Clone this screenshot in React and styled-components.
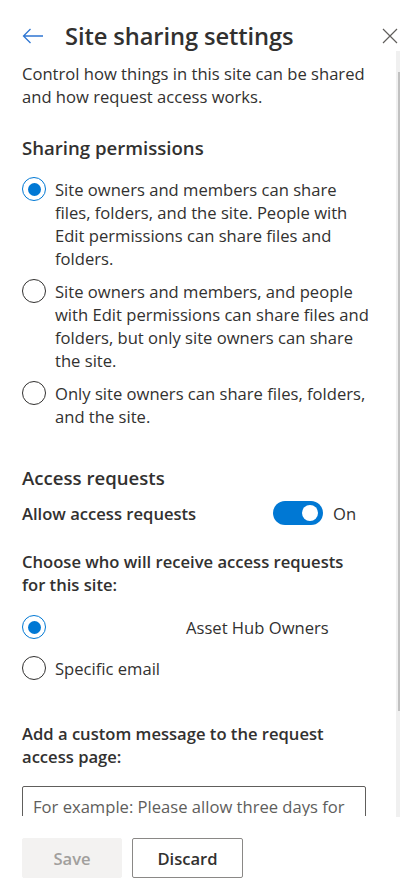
import React from "react";
import styled, { createGlobalStyle } from "styled-components";

const GlobalStyle = createGlobalStyle`
  html, body {
    margin: 0;
    padding: 0;
    background: #ffffff;
  }
  body {
    font-family: "Open Sans", "Noto Sans", Arial, sans-serif;
    color: #323130;
  }
  * { box-sizing: border-box; }
`;

const Panel = styled.div`
  position: relative;
  width: 400px;
  height: 884px;
  display: flex;
  flex-direction: column;
  overflow: hidden;
  background: #fff;
`;

const Header = styled.div`
  display: flex;
  align-items: center;
  height: 60px;
  padding: 16px 0 4px 22px;
`;

const IconButton = styled.button`
  display: flex;
  align-items: center;
  justify-content: center;
  padding: 0;
  border: none;
  background: none;
  width: ${(p) => p.$size}px;
  height: ${(p) => p.$size}px;
  cursor: pointer;
`;

const Title = styled.h1`
  margin: 0 0 0 21px;
  font-size: 23.7px;
  font-weight: 600;
  line-height: 32px;
  letter-spacing: -0.1px;
  color: #323130;
  flex: 1;
`;

const Scroll = styled.div`
  flex: 1;
  overflow: hidden;
  padding: 2px 30px 0 22px;
`;

const Text = styled.p`
  max-width: 344px;
  margin: ${(p) => p.$mt || 0}px 0 0;
  font-size: 16.6px;
  line-height: 23px;
  font-weight: ${(p) => (p.$bold ? 600 : 400)};
  color: #323130;
`;

const SectionTitle = styled.h2`
  margin: ${(p) => p.$mt}px 0 0;
  font-size: 18.6px;
  line-height: 24px;
  font-weight: 600;
  color: #323130;
`;

const RadioGroup = styled.div`
  display: flex;
  flex-direction: column;
  gap: ${(p) => p.$gap}px;
  margin-top: ${(p) => p.$mt}px;
`;

const Option = styled.label`
  display: flex;
  align-items: flex-start;
  gap: 9px;
  font-size: 16.6px;
  line-height: 23px;
  color: #323130;
`;

const Circle = styled.span`
  flex: none;
  width: 24px;
  height: 24px;
  margin-top: -1px;
  border-radius: 50%;
  border: 1px solid ${(p) => (p.$on ? "#0078d4" : "#323130")};
  display: flex;
  align-items: center;
  justify-content: center;
  &::after {
    content: "";
    display: ${(p) => (p.$on ? "block" : "none")};
    width: 13px;
    height: 13px;
    border-radius: 50%;
    background: #0078d4;
  }
`;

const Redacted = styled.span`
  display: inline-block;
  width: 131px;
`;

const ToggleRow = styled.div`
  display: flex;
  align-items: center;
  height: 24px;
  margin-top: 11px;
`;

const ToggleLabel = styled.span`
  font-size: 16.6px;
  font-weight: 600;
  width: 251px;
`;

const Switch = styled.span`
  width: 50px;
  height: 24px;
  border-radius: 12px;
  background: #0078d4;
  display: flex;
  align-items: center;
  justify-content: flex-end;
  padding-right: 5px;
  &::after {
    content: "";
    width: 16px;
    height: 16px;
    border-radius: 50%;
    background: #fff;
  }
`;

const SwitchText = styled.span`
  margin-left: 10px;
  font-size: 16.6px;
`;

const TextArea = styled.textarea`
  display: block;
  width: 344px;
  height: 90px;
  margin-top: 18px;
  padding: 8px 10px;
  border: 1px solid #605e5c;
  border-radius: 2px;
  resize: none;
  font-family: inherit;
  font-size: 16.6px;
  line-height: 23px;
  color: #323130;
  &::placeholder {
    color: #605e5c;
  }
`;

const Footer = styled.div`
  height: 68px;
  display: flex;
  gap: 10px;
  padding: 22px 0 0 22px;
`;

const Button = styled.button`
  height: 40px;
  width: ${(p) => p.$w}px;
  border-radius: 2px;
  font-family: inherit;
  font-size: 16.6px;
  font-weight: 600;
  background: ${(p) => (p.$disabled ? "#f3f2f1" : "#fff")};
  color: ${(p) => (p.$disabled ? "#a19f9d" : "#323130")};
  border: 1px solid ${(p) => (p.$disabled ? "#f3f2f1" : "#8a8886")};
`;

const Track = styled.div`
  position: absolute;
  right: 0;
  top: 51px;
  width: 4px;
  height: 766px;
  background: #f0f0f0;
`;

const Thumb = styled.div`
  position: absolute;
  right: 0;
  top: 21px;
  width: 2px;
  height: 639px;
  background: #c1c1c1;
`;

const BackIcon = () => (
  <svg width="22" height="16" viewBox="0 0 22 16" fill="none">
    <path d="M21 8H1.5M8.5 1L1.5 8l7 7" stroke="#2f76d2" strokeWidth="1.3" />
  </svg>
);

const CloseIcon = () => (
  <svg width="16" height="16" viewBox="0 0 16 16" fill="none">
    <path d="M1 1l14 14M15 1L1 15" stroke="#605e5c" strokeWidth="1.2" />
  </svg>
);

const permissions = [
  "Site owners and members can share files, folders, and the site. People with Edit permissions can share files and folders.",
  "Site owners and members, and people with Edit permissions can share files and folders, but only site owners can share the site.",
  "Only site owners can share files, folders, and the site.",
];

export default function App() {
  return (
    <>
      <GlobalStyle />
      <Panel>
        <Header>
          <IconButton $size={22} aria-label="Back">
            <BackIcon />
          </IconButton>
          <Title>Site sharing settings</Title>
          <IconButton $size={16} aria-label="Close" style={{ marginRight: 2 }}>
            <CloseIcon />
          </IconButton>
        </Header>

        <Scroll>
          <Text>Control how things in this site can be shared and how request access works.</Text>

          <SectionTitle $mt={28}>Sharing permissions</SectionTitle>
          <RadioGroup $gap={10} $mt={18}>
            {permissions.map((p, i) => (
              <Option key={i}>
                <Circle $on={i === 0} />
                <span>{p}</span>
              </Option>
            ))}
          </RadioGroup>

          <SectionTitle $mt={38}>Access requests</SectionTitle>
          <ToggleRow>
            <ToggleLabel>Allow access requests</ToggleLabel>
            <Switch />
            <SwitchText>On</SwitchText>
          </ToggleRow>

          <Text $bold $mt={25}>Choose who will receive access requests for this site:</Text>
          <RadioGroup $gap={18} $mt={20}>
            <Option>
              <Circle $on />
              <span>
                <Redacted />
                Asset Hub Owners
              </span>
            </Option>
            <Option>
              <Circle />
              <span>Specific email</span>
            </Option>
          </RadioGroup>

          <Text $bold $mt={42}>Add a custom message to the request access page:</Text>
          <TextArea placeholder="For example: Please allow three days for a response." />
        </Scroll>

        <Footer>
          <Button $w={100} $disabled>Save</Button>
          <Button $w={111}>Discard</Button>
        </Footer>

        <Track>
          <Thumb />
        </Track>
      </Panel>
    </>
  );
}
